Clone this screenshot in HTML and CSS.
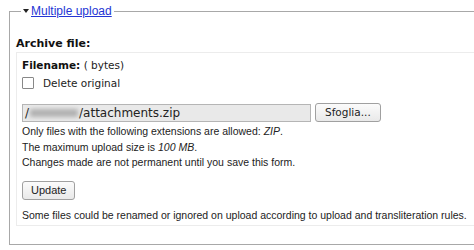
FILE: index.html
```html
<!DOCTYPE html>
<html>
<head>
<meta charset="utf-8">
<link rel="stylesheet" href="styles.css">
</head>
<body>
<fieldset class="fs">
  <legend class="lg"><span class="tri"></span><a href="#" class="lnk">Multiple upload</a></legend>
  <div class="title">Archive file:</div>
  <div class="box">
    <div class="fname"><b>Filename:</b> ( bytes)</div>
    <label class="chk"><span class="cb"></span>Delete original</label>
    <div class="filerow">
      <div class="path">/<span class="blur"></span>/attachments.zip</div>
      <span class="btn">Sfoglia...</span>
    </div>
    <div class="desc">
      <div>Only files with the following extensions are allowed: <em>ZIP</em>.</div>
      <div>The maximum upload size is <em>100 MB</em>.</div>
      <div>Changes made are not permanent until you save this form.</div>
    </div>
    <span class="btn upd">Update</span>
    <div class="desc note">Some files could be renamed or ignored on upload according to upload and transliteration rules.</div>
  </div>
</fieldset>
</body>
</html>
```
FILE: styles.css
```css
html, body { margin: 0; padding: 0; background: #fff; overflow: hidden; }
body { width: 474px; height: 250px; font-family: "DejaVu Sans", sans-serif; color: #222; }
.fs {
  margin: 4px 0 0 9px;
  width: 480px;
  border: 1px solid #a8a8a8;
  padding: 0 0 18px 6px;
  box-sizing: border-box;
}
.lg { padding: 0 2px 0 1px; margin-left: 5px; font-family: "Liberation Sans", Arial, sans-serif; font-size: 12px; line-height: 15px; }
.tri { display: inline-block; width: 0; height: 0; border-left: 3px solid transparent; border-right: 3px solid transparent; border-top: 4px solid #222; margin: 0 2px 2px 1px; vertical-align: middle; }
.lnk { color: #2434d4; text-decoration: underline; }
.title { font-weight: bold; font-size: 11px; line-height: 14px; margin-top: 18px; color: #111; }
.box { margin-top: 1px; border: 1px solid #ececec; border-right: none; background: #fff; padding: 5px 0 2px 5px; }
.fname { font-size: 10.5px; line-height: 14px; color: #222; }
.fname b { color: #111; }
.chk { display: flex; align-items: center; font-size: 10.5px; line-height: 14px; margin-top: 4px; }
.cb { width: 10px; height: 10px; border: 1px solid #888; border-radius: 1px; margin: 0 9px 0 0; background: #fff; }
.filerow { display: flex; align-items: center; margin-top: 13px; }
.path { width: 285px; height: 16px; border: 1px solid #b5b5b5; background: #e9e9e9; font-size: 12px; line-height: 16px; padding-left: 2px; color: #222; display: flex; align-items: center; }
.blur { display: inline-block; width: 48px; height: 8px; background: #9a9a9a; filter: blur(2px); opacity: .7; margin: 0 1px; }
.btn { display: block; width: max-content; border: 1px solid #a0a0a0; border-radius: 3px; background: linear-gradient(#fbfbfb, #e9e9e9); font-size: 10.5px; line-height: 17px; padding: 0 9px; color: #222; margin-left: 4px; }
.desc { font-family: "Liberation Sans", Arial, sans-serif; font-size: 10.5px; line-height: 15.5px; margin-top: 2px; color: #222; }
.upd { margin: 10px 0 0 0; padding: 0 8px; font-family: "Liberation Sans", Arial, sans-serif; font-size: 11px; border-radius: 3px; }
.note { margin-top: 8px; }
```
